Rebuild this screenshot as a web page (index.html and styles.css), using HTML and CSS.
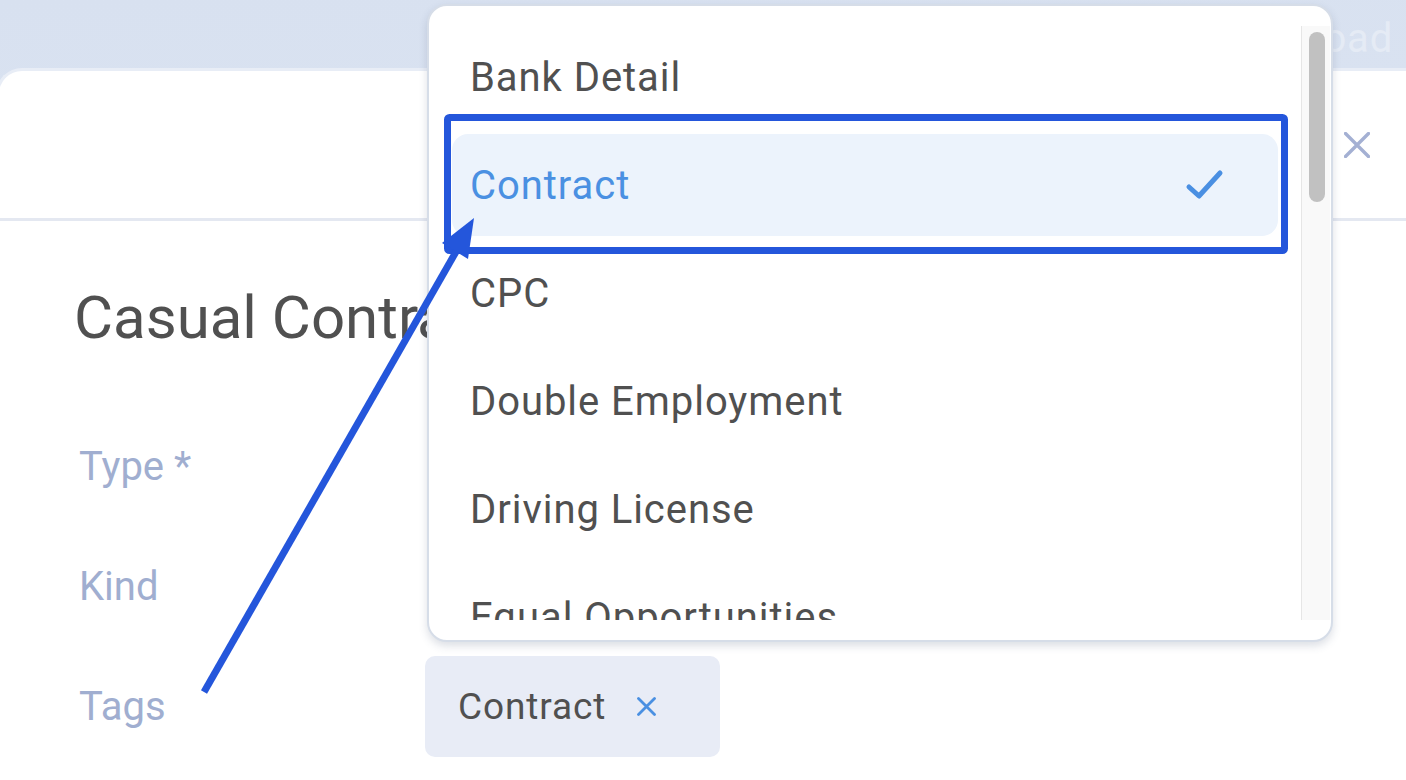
FILE: index.html
```html
<!DOCTYPE html>
<html>
<head>
<meta charset="utf-8">
<link rel="stylesheet" href="styles.css">
</head>
<body>
<div class="page">
  <div class="topbar"><span class="topbar-action">Upload</span></div>
  <div class="modal">
    <div class="modal-header">
      <button class="close-btn" aria-label="Close">
        <svg width="26" height="26" viewBox="0 0 26 26"><path d="M1.5 1.5 L24.5 24.5 M24.5 1.5 L1.5 24.5" stroke="#a4b0d3" stroke-width="3.4" stroke-linecap="round" fill="none"/></svg>
      </button>
    </div>
    <div class="modal-body">
      <h1 class="title">Casual Contract</h1>
      <div class="form">
        <div class="form-row">
          <div class="label">Type *</div>
          <div class="value"></div>
        </div>
        <div class="form-row">
          <div class="label">Kind</div>
          <div class="value"></div>
        </div>
        <div class="form-row">
          <div class="label">Tags</div>
          <div class="value">
            <span class="chip">Contract
              <svg class="chip-x" width="19" height="19" viewBox="0 0 19 19"><path d="M1.5 1.5 L17.5 17.5 M17.5 1.5 L1.5 17.5" stroke="#4a90e2" stroke-width="2.8" stroke-linecap="round" fill="none"/></svg>
            </span>
          </div>
        </div>
      </div>
    </div>
  </div>

  <div class="dropdown">
    <ul class="options">
      <li class="option">Bank Detail</li>
      <li class="option selected">Contract
        <svg class="check" width="44" height="34" viewBox="0 0 44 34"><path d="M6 18 L16 27 L37 4" stroke="#4a8fe2" stroke-width="5" stroke-linecap="round" stroke-linejoin="round" fill="none"/></svg>
      </li>
      <li class="option">CPC</li>
      <li class="option">Double Employment</li>
      <li class="option">Driving License</li>
      <li class="option">Equal Opportunities</li>
    </ul>
    <div class="scroll-track"><div class="scroll-thumb"></div></div>
  </div>

  <svg class="annotation" width="1406" height="780" viewBox="0 0 1406 780">
    <rect x="447.5" y="117.5" width="837" height="133" rx="2" fill="none" stroke="#2456db" stroke-width="7"/>
    <line x1="204" y1="692" x2="457" y2="250" stroke="#2456db" stroke-width="7"/>
    <polygon points="474,218 442,243 468,259" fill="#2456db"/>
  </svg>
</div>
</body>
</html>
```

FILE: styles.css
```css
* { box-sizing: border-box; }
html, body {
  margin: 0;
  padding: 0;
  width: 1406px;
  height: 780px;
  overflow: hidden;
  background: #dbe4f2;
  font-family: Roboto, "Liberation Sans", sans-serif;
}
.page {
  position: relative;
  width: 1406px;
  height: 780px;
  overflow: hidden;
  background: linear-gradient(178deg, #d8e1f0 0%, #dce5f3 60%, #dbe4f2 100%);
}
.topbar {
  height: 68px;
  display: flex;
  justify-content: flex-end;
  padding: 15px 13px 0 0;
}
.topbar-action {
  font-size: 40px;
  line-height: 47px;
  letter-spacing: 0.8px;
  color: #e5ebf5;
}
.modal {
  margin-left: -4px;
  height: 712px;
  background: #fff;
  border-top: 3px solid #e8edf6;
  border-left: 3px solid #e8edf6;
  border-radius: 26px 0 0 0;
}
.modal-header {
  height: 150px;
  border-bottom: 3px solid #e4e8f1;
  display: flex;
  justify-content: flex-end;
  align-items: center;
  padding-right: 36px;
}
.close-btn {
  border: 0;
  background: none;
  padding: 0;
  width: 26px;
  height: 26px;
  display: flex;
}
.modal-body {
  padding: 61px 0 0 75px;
}
.title {
  margin: 0;
  font-size: 60px;
  line-height: 72px;
  font-weight: 400;
  color: #505050;
}
.form {
  margin-top: 52px;
  padding-left: 5px;
}
.form-row {
  display: flex;
  align-items: center;
  height: 120px;
}
.label {
  width: 346px;
  font-size: 40px;
  line-height: 47px;
  color: #a0aed0;
}
.value {
  display: flex;
  align-items: center;
}
.chip {
  display: inline-flex;
  align-items: center;
  height: 101px;
  padding: 0 64px 0 33px;
  background: #e8ecf6;
  border-radius: 10px;
  font-size: 37px;
  letter-spacing: 0.9px;
  color: #505050;
}
.chip-x {
  margin-left: 31px;
}

.dropdown {
  position: absolute;
  left: 427px;
  top: 4px;
  width: 906px;
  height: 638px;
  background: #fff;
  border: 2px solid #d6dde8;
  border-radius: 20px;
  box-shadow: 0 4px 8px rgba(60, 80, 110, 0.18);
  display: flex;
  padding: 20px 1px 20px 23px;
}
.options {
  list-style: none;
  margin: 0;
  padding: 0 23px 0 0;
  flex: 1;
  overflow: hidden;
  display: flex;
  flex-direction: column;
  gap: 6px;
}
.option {
  flex: none;
  height: 102px;
  display: flex;
  align-items: center;
  justify-content: space-between;
  padding: 0 51px 0 18px;
  font-size: 40px;
  letter-spacing: 0.95px;
  color: #505050;
  border-radius: 16px;
}
.option.selected {
  background: #ecf3fc;
  color: #4a90e2;
}
.check {
  margin-top: 2px;
}
.scroll-track {
  width: 29px;
  background: #f9f9f9;
  border-left: 1px solid #e6e6e6;
  padding: 6px 0 0 7px;
}
.scroll-thumb {
  width: 16px;
  height: 170px;
  background: #c1c1c1;
  border-radius: 8px;
}
.annotation {
  position: absolute;
  left: 0;
  top: 0;
  pointer-events: none;
}
```
